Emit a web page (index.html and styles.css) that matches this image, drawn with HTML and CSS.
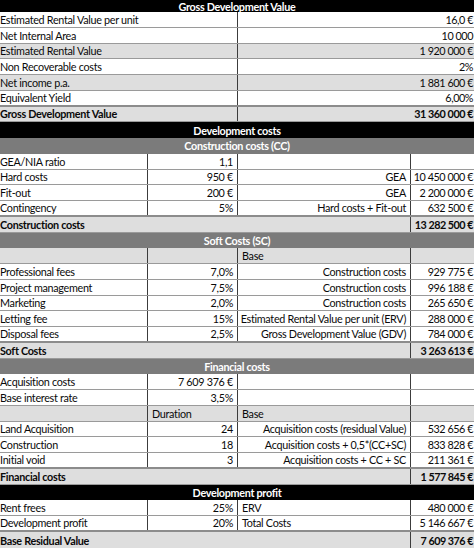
FILE: index.html
```html
<!DOCTYPE html>
<html>
<head>
<meta charset="utf-8">
<link rel="stylesheet" href="styles.css">
</head>
<body>
<div class="sheet">
  <div class="row head first"><div class="cell all">Gross Development Value</div></div>

  <div class="row"><div class="cell s12">Estimated Rental Value per unit</div><div class="cell s34 r">16,0 €</div></div>
  <div class="row"><div class="cell s12">Net Internal Area</div><div class="cell s34 r">10 000</div></div>
  <div class="row gray"><div class="cell s12">Estimated Rental Value</div><div class="cell s34 r">1 920 000 €</div></div>
  <div class="row"><div class="cell s12">Non Recoverable costs</div><div class="cell s34 r">2%</div></div>
  <div class="row gray"><div class="cell s12">Net income p.a.</div><div class="cell s34 r">1 881 600 €</div></div>
  <div class="row thick"><div class="cell s12">Equivalent Yield</div><div class="cell s34 r">6,00%</div></div>
  <div class="row gray bold"><div class="cell s12">Gross Development Value</div><div class="cell s34 r">31 360 000 €</div></div>

  <div class="row head"><div class="cell all">Development costs</div></div>
  <div class="row sub"><div class="cell all">Construction costs (CC)</div></div>
  <div class="row"><div class="cell c1">GEA/NIA ratio</div><div class="cell r">1,1</div><div class="cell"></div><div class="cell"></div></div>
  <div class="row"><div class="cell c1">Hard costs</div><div class="cell r">950 €</div><div class="cell r">GEA</div><div class="cell r">10 450 000 €</div></div>
  <div class="row"><div class="cell c1">Fit-out</div><div class="cell r">200 €</div><div class="cell r">GEA</div><div class="cell r">2 200 000 €</div></div>
  <div class="row thick"><div class="cell c1">Contingency</div><div class="cell r">5%</div><div class="cell r">Hard costs + Fit-out</div><div class="cell r">632 500 €</div></div>
  <div class="row gray bold"><div class="cell s13">Construction costs</div><div class="cell r">13 282 500 €</div></div>

  <div class="row sub"><div class="cell all">Soft Costs (SC)</div></div>
  <div class="row gray"><div class="cell c1"></div><div class="cell"></div><div class="cell">Base</div><div class="cell"></div></div>
  <div class="row"><div class="cell c1">Professional fees</div><div class="cell r">7,0%</div><div class="cell r">Construction costs</div><div class="cell r">929 775 €</div></div>
  <div class="row"><div class="cell c1">Project management</div><div class="cell r">7,5%</div><div class="cell r">Construction costs</div><div class="cell r">996 188 €</div></div>
  <div class="row"><div class="cell c1">Marketing</div><div class="cell r">2,0%</div><div class="cell r">Construction costs</div><div class="cell r">265 650 €</div></div>
  <div class="row"><div class="cell c1">Letting fee</div><div class="cell r">15%</div><div class="cell r">Estimated Rental Value per unit (ERV)</div><div class="cell r">288 000 €</div></div>
  <div class="row thick"><div class="cell c1">Disposal fees</div><div class="cell r">2,5%</div><div class="cell r">Gross Development Value (GDV)</div><div class="cell r">784 000 €</div></div>
  <div class="row gray bold"><div class="cell s13">Soft Costs</div><div class="cell r">3 263 613 €</div></div>

  <div class="row sub"><div class="cell all">Financial costs</div></div>
  <div class="row"><div class="cell c1">Acquisition costs</div><div class="cell r">7 609 376 €</div><div class="cell"></div><div class="cell"></div></div>
  <div class="row"><div class="cell c1">Base interest rate</div><div class="cell r">3,5%</div><div class="cell"></div><div class="cell"></div></div>
  <div class="row gray"><div class="cell c1"></div><div class="cell">Duration</div><div class="cell">Base</div><div class="cell"></div></div>
  <div class="row"><div class="cell c1">Land Acquisition</div><div class="cell r">24</div><div class="cell r">Acquisition costs (residual Value)</div><div class="cell r">532 656 €</div></div>
  <div class="row"><div class="cell c1">Construction</div><div class="cell r">18</div><div class="cell r">Acquisition costs + 0,5*(CC+SC)</div><div class="cell r">833 828 €</div></div>
  <div class="row thick"><div class="cell c1">Initial void</div><div class="cell r">3</div><div class="cell r">Acquisition costs + CC + SC</div><div class="cell r">211 361 €</div></div>
  <div class="row gray bold"><div class="cell s13">Financial costs</div><div class="cell r">1 577 845 €</div></div>

  <div class="row head"><div class="cell all">Development profit</div></div>
  <div class="row"><div class="cell c1">Rent frees</div><div class="cell r">25%</div><div class="cell">ERV</div><div class="cell r">480 000 €</div></div>
  <div class="row thick"><div class="cell c1">Development profit</div><div class="cell r">20%</div><div class="cell">Total Costs</div><div class="cell r">5 146 667 €</div></div>
  <div class="row gray bold last"><div class="cell s13">Base Residual Value</div><div class="cell r">7 609 376 €</div></div>
</div>
</body>
</html>
```

FILE: styles.css
```css
html, body {
  margin: 0;
  padding: 0;
  overflow: hidden;
  background: #ffffff;
}

.sheet {
  width: 474px;
  font-family: Lato, "Open Sans", sans-serif;
  font-size: 10.8px;
  color: #0a0a0a;
  letter-spacing: -0.3px;
}

.row {
  display: grid;
  grid-template-columns: 147px 90px 173px 64px;
  height: 15.76px;
  box-sizing: border-box;
  border-bottom: 1px solid #9a9a9a;
}

.row.first {
  height: 12px;
}

.row.thick {
  border-bottom: 2.5px solid #8c8c8c;
}

.row.last {
  height: 17px;
  border-bottom: none;
}

.cell {
  padding: 0 4px;
  display: flex;
  align-items: center;
  white-space: nowrap;
  overflow: hidden;
  border-left: 1px solid #3c3c3c;
  box-sizing: border-box;
}

.cell.c1,
.cell.s12,
.cell.s13 {
  border-left: none;
  padding-left: 0;
}

.cell.s34,
.row > .cell:nth-child(4) {
  padding-right: 1px;
  padding-left: 2px;
  letter-spacing: -0.45px;
}

.row > .cell.s13 + .cell {
  padding-right: 1px;
  padding-left: 2px;
  letter-spacing: -0.5px;
}

.s12 { grid-column: 1 / 3; }
.s34 { grid-column: 3 / 5; }
.s13 { grid-column: 1 / 4; }

.r { justify-content: flex-end; }

.gray { background: #dedede; }
.bold { font-weight: bold; }

.head,
.sub {
  border-bottom: none;
  color: #ffffff;
  font-weight: bold;
}

.head { background: #000000; }
.sub { background: #7b7b7b; }

.cell.all {
  grid-column: 1 / 5;
  border-left: none;
  justify-content: center;
  letter-spacing: -0.3px;
}
```
